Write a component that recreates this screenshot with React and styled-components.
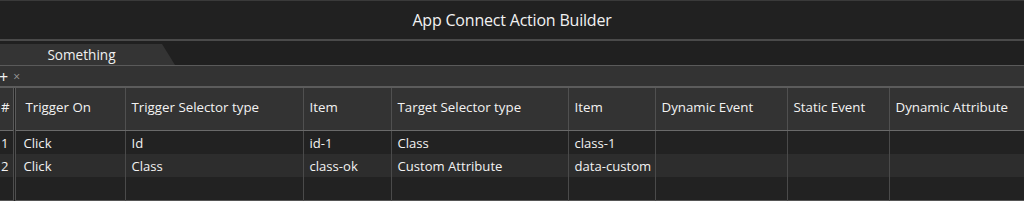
import React from 'react';
import styled, { createGlobalStyle } from 'styled-components';

const GlobalStyle = createGlobalStyle`
  body {
    margin: 0;
    background: #ffffff;
    font-family: 'Open Sans', 'Noto Sans', sans-serif;
  }
`;

const Window = styled.div`
  width: 1024px;
  background: #212121;
  color: #f2f2f2;
`;

const TitleBar = styled.header`
  height: 38px;
  display: flex;
  align-items: center;
  justify-content: center;
  border-top: 1px solid #3a3a3a;
  border-bottom: 2px solid #4a4a4a;
  font-size: 16px;
  letter-spacing: -0.2px;
`;

const TabStrip = styled.div`
  height: 24px;
  display: flex;
  align-items: flex-end;
  border-bottom: 1px solid #5a5a5a;
  background: #202020;
`;

const Tab = styled.div`
  width: 175px;
  height: 21px;
  background: #343434;
  clip-path: polygon(0 0, 162px 0, 100% 100%, 0 100%);
  display: flex;
  align-items: center;
  justify-content: center;
  padding-right: 12px;
  box-sizing: border-box;
  font-size: 13.6px;
  color: #f0f0f0;
`;

const Toolbar = styled.div`
  height: 22px;
  display: flex;
  align-items: center;
  gap: 5px;
  padding-top: 2px;
  box-sizing: border-box;
  background: #333333;
  border-bottom: 2px solid #5c5c5c;
`;

const ToolButton = styled.span`
  font-size: ${p => (p.$small ? '12px' : '16px')};
  line-height: 1;
  color: ${p => (p.$small ? '#9a9a9a' : '#f0f0f0')};
  margin-left: ${p => (p.$small ? '0' : '-1px')};
`;

const Table = styled.table`
  width: 1024px;
  border-collapse: collapse;
  table-layout: fixed;
  border-bottom: 1px solid #555555;
`;

const HeadCell = styled.th`
  height: 38px;
  padding: 0 0 4px ${p => p.$pad || 6}px;
  text-align: left;
  font-size: 13.3px;
  font-weight: normal;
  color: #f2f2f2;
  background: #333333;
  border-right: ${p => (p.$double ? '3px double #5a5a5a' : '1px solid #505050')};
  border-bottom: 1px solid #6a6a6a;
  white-space: nowrap;
  overflow: hidden;
  &:last-child { border-right: none; }
`;

const Row = styled.tr`
  background: ${p => (p.$alt ? '#2d2d2d' : '#222222')};
`;

const Cell = styled.td`
  height: 23px;
  padding: 0 0 0 ${p => p.$pad || 6}px;
  font-size: 13.1px;
  color: #f2f2f2;
  border-right: ${p => (p.$double ? '3px double #4e4e4e' : '1px solid #4a4a4a')};
  white-space: nowrap;
  overflow: hidden;
  &:last-child { border-right: none; }
`;

const columns = [
  { label: '#', width: 14, pad: 1, double: true },
  { label: 'Trigger On', width: 111, pad: 10 },
  { label: 'Trigger Selector type', width: 178 },
  { label: 'Item', width: 88 },
  { label: 'Target Selector type', width: 177 },
  { label: 'Item', width: 87 },
  { label: 'Dynamic Event', width: 132 },
  { label: 'Static Event', width: 102 },
  { label: 'Dynamic Attribute', width: 135 },
];

const rows = [
  ['1', 'Click', 'Id', 'id-1', 'Class', 'class-1', '', '', ''],
  ['2', 'Click', 'Class', 'class-ok', 'Custom Attribute', 'data-custom', '', '', ''],
  ['', '', '', '', '', '', '', '', ''],
];

export default function App() {
  return (
    <>
      <GlobalStyle />
      <Window>
        <TitleBar>App Connect Action Builder</TitleBar>
        <TabStrip>
          <Tab>Something</Tab>
        </TabStrip>
        <Toolbar>
          <ToolButton>+</ToolButton>
          <ToolButton $small>×</ToolButton>
        </Toolbar>
        <Table>
          <colgroup>
            {columns.map((c, i) => (
              <col key={i} style={{ width: c.width }} />
            ))}
          </colgroup>
          <thead>
            <tr>
              {columns.map((c, i) => (
                <HeadCell key={i} $pad={c.pad} $double={c.double}>{c.label}</HeadCell>
              ))}
            </tr>
          </thead>
          <tbody>
            {rows.map((r, ri) => (
              <Row key={ri} $alt={ri % 2 === 1}>
                {r.map((v, ci) => (
                  <Cell key={ci} $pad={ci === 0 ? 1 : ci === 1 ? 8 : 6} $double={columns[ci].double}>{v}</Cell>
                ))}
              </Row>
            ))}
          </tbody>
        </Table>
      </Window>
    </>
  );
}
